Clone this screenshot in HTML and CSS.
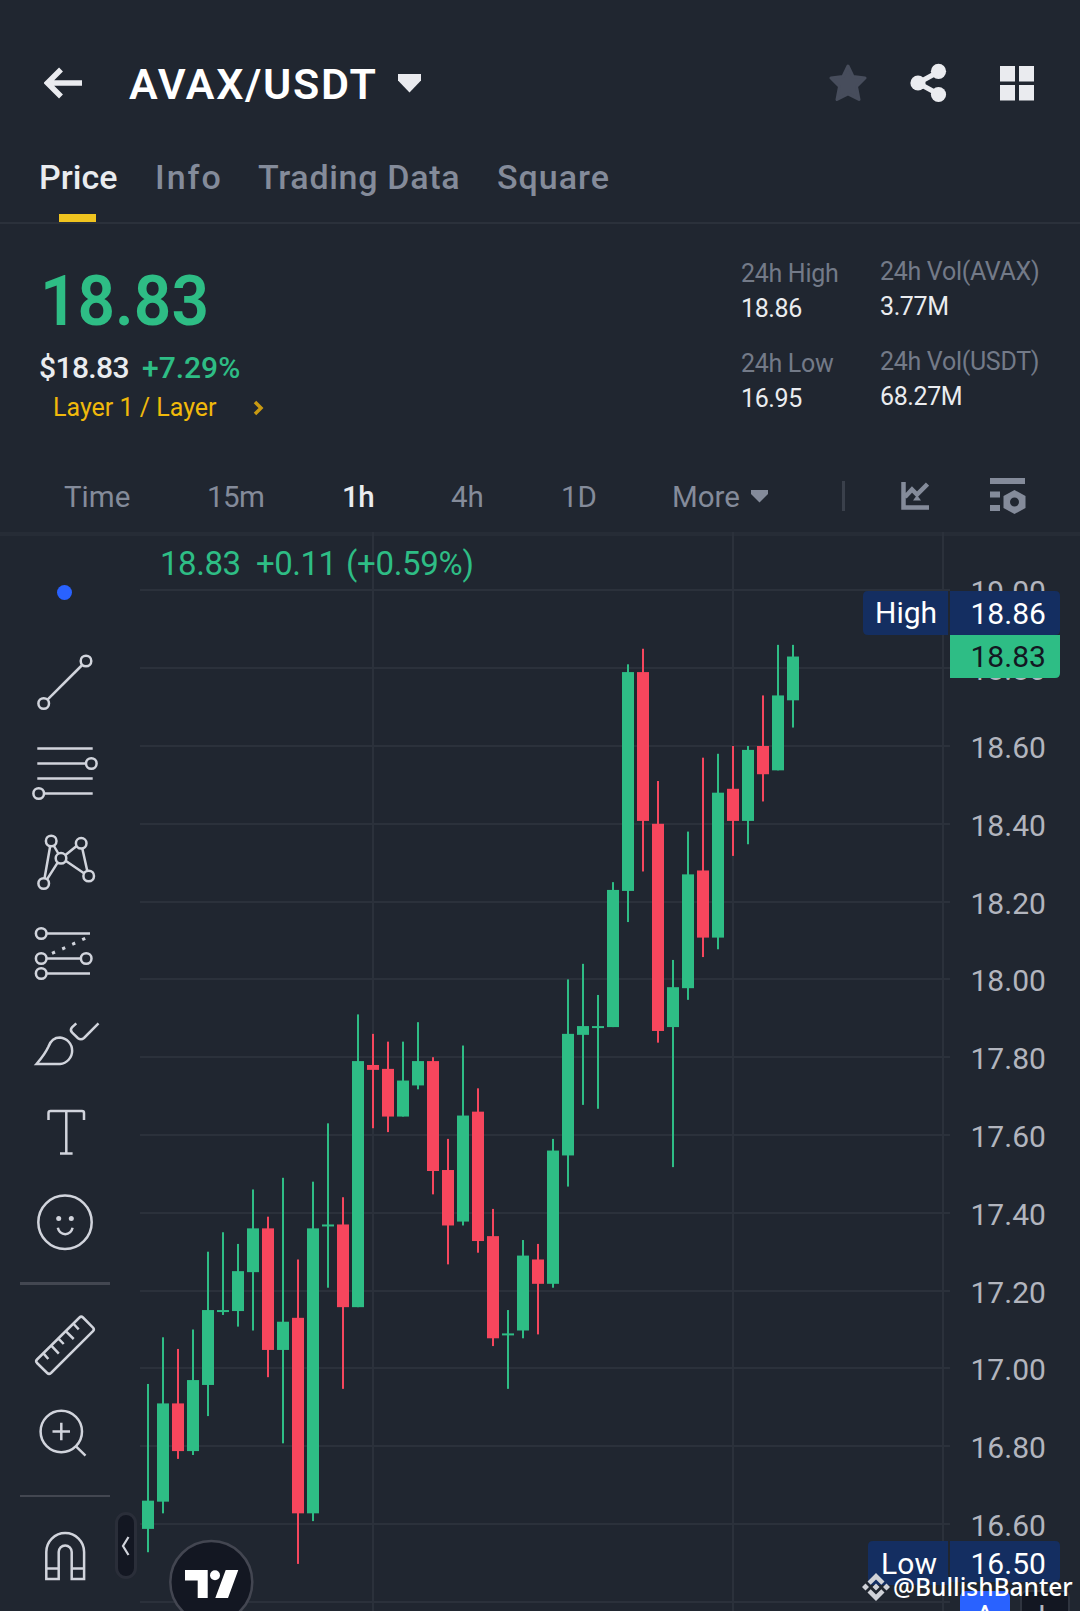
FILE: index.html
```html
<!DOCTYPE html>
<html lang="en">
  <head>
    <meta charset="UTF-8" />
    <meta name="viewport" content="width=device-width, initial-scale=1.0" />
    <title>AVAX/USDT</title>
    <link rel="stylesheet" href="styles.css">
  </head>
  <body>
    <header class="header">
      <svg class="back" width="38" height="32" viewBox="0 0 38 32"><path d="M38 16H4M17 2.500L3.500 16L17 29.500" /></svg>
      <h1 class="pair">AVAX/USDT</h1>
      <svg class="pair-caret" width="23" height="19" viewBox="0 0 23 19"><path d="M0 0H23V6.500L11.500 18.500L0 6.500Z" /></svg>
      <div class="header-icons">
        <svg class="star" width="38" height="40" viewBox="0 0 38 40"><path d="M19 3L24 13.500L36 15L27.500 23.500L30 36.500L19 31L8 36.500L10.500 23.500L2 15L14 13.500Z" /></svg>
        <svg class="share" width="38" height="40" viewBox="0 0 38 40">
          <path d="M30 8.500L9 20L30 31.500" />
          <circle cx="9" cy="20" r="7.600" /><circle cx="29.500" cy="8.300" r="7.600" /><circle cx="29.500" cy="31.500" r="7.600" />
        </svg>
        <svg class="grid-icon" width="34" height="35" viewBox="0 0 34 35"><path d="M0 0H15V15.500H0ZM19 0H34V15.500H19ZM0 19H15V34.500H0ZM19 19H34V34.500H19Z" /></svg>
      </div>
    </header>

    <nav class="tabs">
      <a class="tab active t-price">Price</a>
      <a class="tab t-info">Info</a>
      <a class="tab t-data">Trading Data</a>
      <a class="tab t-square">Square</a>
    </nav>

    <section class="summary">
      <div class="price-box">
        <div class="last-price">18.83</div>
        <div class="price-row"><span class="fiat">$18.83</span><span class="change">+7.29%</span></div>
        <div class="category">
          <span>Layer 1 / Layer</span>
          <svg width="11" height="16" viewBox="0 0 11 16"><path d="M2 2L8 8L2 14" /></svg>
        </div>
      </div>
      <div class="stats">
        <div class="stat-col">
          <div class="stat-label">24h High</div>
          <div class="stat-value">18.86</div>
          <div class="stat-label">24h Low</div>
          <div class="stat-value">16.95</div>
        </div>
        <div class="stat-col stat-vol">
          <div class="stat-label">24h Vol(AVAX)</div>
          <div class="stat-value">3.77M</div>
          <div class="stat-label">24h Vol(USDT)</div>
          <div class="stat-value">68.27M</div>
        </div>
      </div>
    </section>

    <nav class="intervals">
      <span class="iv iv-time">Time</span>
      <span class="iv iv-15m">15m</span>
      <span class="iv iv-1h active">1h</span>
      <span class="iv iv-4h">4h</span>
      <span class="iv iv-1d">1D</span>
      <span class="iv iv-more">More</span>
      <svg class="more-caret" width="17" height="13" viewBox="0 0 17 13"><path d="M0 0H17V4L8.500 12.500L0 4Z" /></svg>
      <i class="sep"></i>
      <svg class="line-icon" width="28" height="28" viewBox="0 0 28 28">
        <path class="stroke" d="M2.500 0V25.500H28M4 15L11 7.500L16 12.500L26.500 2" />
        <path d="M16 13L20 18.500H12Z" />
      </svg>
      <svg class="settings-icon" width="36" height="38" viewBox="0 0 36 38">
        <path d="M0 1H35V7H0ZM0 14.500H10V20.500H0ZM0 28H10V34H0Z" />
        <path fill-rule="evenodd" d="M24.500 13L35.500 19V31L24.500 37L13.500 31V19ZM24.500 20.500A4.500 4.500 0 1 0 24.500 29.500A4.500 4.500 0 1 0 24.500 20.500Z" />
      </svg>
    </nav>

    <main class="chart-area">
      <aside class="toolbar">
        <div class="dot-row"><i class="dot"></i></div>
        <!-- trend line -->
        <svg class="tool" viewBox="0 0 140 90"><path d="M47.500 62.700L82.200 28" /><circle cx="43.700" cy="66.500" r="5.300" /><circle cx="86" cy="24" r="5.300" /></svg>
        <!-- fib retracement -->
        <svg class="tool" viewBox="0 0 140 90"><path d="M37.300 21.500H92.700M37.300 36.500H86M37.300 51.500H92.700M44 66.500H92.700" /><circle cx="91.300" cy="36.500" r="5.300" /><circle cx="38.700" cy="66.500" r="5.300" /></svg>
        <!-- pattern -->
        <svg class="tool" viewBox="0 0 140 90"><path d="M50.200 29L44.600 61M53.700 28.500L58.300 36.500M57.800 45.300L47 62.300M65.500 38L76.600 29M82.200 31L87.300 54M65.600 43.800L84 56.300" /><circle cx="51.200" cy="24" r="5.300" /><circle cx="61" cy="41.300" r="5.300" /><circle cx="81.200" cy="26.300" r="5.300" /><circle cx="88.700" cy="59" r="5.300" /><circle cx="43.700" cy="66.500" r="5.300" /></svg>
        <!-- forecast -->
        <svg class="tool" viewBox="0 0 140 90"><path d="M46.300 26.500H90M46.300 51.500H80.700M46.300 66.500H90" /><path d="M52 46.300L55 45M62.200 42L65.200 40.700M72.200 37.300L75.200 36M82.200 32.700L85.200 31.300" stroke-width="3" /><circle cx="41.200" cy="26.500" r="5.300" /><circle cx="41.200" cy="51.500" r="5.300" /><circle cx="86.200" cy="51.500" r="5.300" /><circle cx="41.200" cy="66.500" r="5.300" /></svg>
        <!-- brush -->
        <svg class="tool" viewBox="0 0 140 90"><path d="M36.500 67C43 59.500 46 55 48.500 49.500C50.500 44 54.500 40.500 60 40.500A13.300 13.300 0 0 1 60 67ZM98.500 26.300L84 41Q81 43.500 78 41.200L72 35.500Q69.800 33 72 30.300L76.300 26.300" /></svg>
        <!-- text -->
        <svg class="tool" viewBox="0 0 140 90"><path d="M48.500 33V26Q48.500 24 50.500 24H82Q84 24 84 26V33M66.300 24V66.500M60 66.500H72.600" /></svg>
        <!-- emoji -->
        <svg class="tool" viewBox="0 0 140 90"><circle cx="65" cy="45.200" r="26.700" /><path d="M57.800 50.800C60 59.300 70.400 59.300 72.600 50.800" /><circle class="fill" cx="58.700" cy="41.500" r="2.500" /><circle class="fill" cx="71.300" cy="41.500" r="2.500" /></svg>
        <i class="tool-line"></i>
        <!-- ruler -->
        <svg class="tool" viewBox="0 0 140 90"><path d="M79.500 17.500Q81.200 15.800 83 17.500L93 27.500Q94.700 29.300 93 31.200L51 73Q49 74.700 47.200 73L37 63Q35.300 61.200 37 59.500ZM43.700 53.600L48.300 59M51.300 45.700L58.800 53.700M58.700 38.800L63.700 44M66 31.300L73.700 39M73.700 24L78.700 29.300" /></svg>
        <!-- zoom -->
        <svg class="tool" viewBox="0 0 140 90"><circle cx="61.300" cy="41.500" r="20.700" /><path d="M52.500 41.500H70M61.300 32.800V50.300M76 56.400L85.500 65.700" /></svg>
        <i class="tool-line last"></i>
        <!-- magnet -->
        <svg class="tool" viewBox="0 0 140 90"><path d="M46.300 73V46A18.900 18.900 0 0 1 84.100 46V73H71.700V46A6.500 6.500 0 0 0 58.700 46V73ZM46.300 62.500H58.700M71.700 62.500H84.100" /></svg>
      </aside>

      <svg class="chart" width="940" height="1079" viewBox="0 0 940 1079">
        <g id="grid"></g>
        <g id="candles"></g>
        <g id="axis"></g>
        <g class="legend">
          <text x="20" y="42.500" textLength="81">18.83</text>
          <text x="116" y="42.500" textLength="81">+0.11</text>
          <text x="206" y="42.500" textLength="128">(+0.59%)</text>
        </g>
        <!-- high / last / low labels -->
        <path class="tag" d="M728 59H808V103H728Q723 103 723 98V64Q723 59 728 59Z" />
        <path class="tag" d="M810 59H915Q920 59 920 64V98Q920 103 915 103H810Z" />
        <path class="tag-last" d="M810 103H920V141Q920 146 915 146H810Z" />
        <text class="tag-text" x="735" y="90.500" textLength="62">High</text>
        <text class="tag-text" x="830.500" y="92">18.86</text>
        <text class="last-text" x="830.500" y="135">18.83</text>
        <path class="tag" d="M733 1009H808V1053H733Q728 1053 728 1048V1014Q728 1009 733 1009Z" />
        <path class="tag" d="M810 1009H915Q920 1009 920 1014V1045Q920 1050 915 1050H810Z" />
        <text class="tag-text" x="741" y="1042" textLength="56">Low</text>
        <text class="tag-text" x="830.500" y="1042">16.50</text>
        <!-- scale buttons -->
        <rect class="btn-auto" x="820" y="1059" width="50" height="50" rx="6" />
        <rect class="btn-log" x="881" y="1059" width="48" height="50" rx="6" />
        <text class="btn-text" x="835" y="1094">A</text>
        <text class="btn-text dim" x="898" y="1094">L</text>
        <!-- tradingview badge -->
        <circle class="tv-bg" cx="71.300" cy="1050" r="41" />
        <path class="tv" d="M45 1038H67.700V1066H57.700V1048.500H45ZM85.700 1038H98.300L88 1066H75.300Z" />
        <circle class="tv" cx="75" cy="1043.300" r="5" />
      </svg>

      <button class="collapse"><svg width="10" height="22" viewBox="0 0 10 22"><path d="M7.500 2L2 11L7.500 20" /></svg></button>
      <div class="author">
        <svg width="28" height="28" viewBox="0 0 28 28"><path d="M14 0L22.500 8.500L19.300 11.700L14 6.400L8.700 11.700L5.500 8.500ZM14 28L22.500 19.500L19.300 16.300L14 21.600L8.700 16.300L5.500 19.500ZM14 10.500L17.500 14L14 17.500L10.500 14ZM3.500 10.500L7 14L3.500 17.500L0 14ZM24.500 10.500L28 14L24.500 17.500L21 14Z" /></svg>
        <span>@BullishBanter</span>
      </div>
    </main>
    <script src="chart.js"></script>
  </body>
</html>
```

FILE: styles.css
```css
body {
  margin: 0;
  width: 1080px;
  height: 1611px;
  overflow: hidden;
  background-color: #202630;
  color: #eaecef;
  font-family: Roboto, "Liberation Sans", sans-serif;
}

.header {
  display: flex;
  align-items: center;
  height: 166px;
  padding: 0 46px 0 44px;
  box-sizing: border-box;
}

.back path {
  fill: none;
  stroke: #eaebef;
  stroke-width: 5.5;
}

.pair {
  margin: 2px 0 0 47px;
  width: 251px;
  font-size: 43px;
  font-weight: 600;
  letter-spacing: 1.7px;
  color: #fff;
}

.pair-caret {
  margin-left: 18px;
  fill: #eaebef;
}

.header-icons {
  display: flex;
  align-items: center;
  margin-left: auto;
}

.star {
  fill: #474d5c;
  stroke: #474d5c;
  stroke-width: 3;
  stroke-linejoin: round;
}

.share {
  margin-left: 42px;
  fill: #eaebef;
}

.share path {
  fill: none;
  stroke: #eaebef;
  stroke-width: 5;
}

.grid-icon {
  margin-left: 53px;
  fill: #eaebef;
}

.tabs {
  display: flex;
  height: 56px;
  padding-left: 39px;
  border-bottom: 2px solid #2b313b;
}

.tab {
  position: relative;
  font-size: 34px;
  line-height: 22px;
  font-weight: 500;
  color: #848b9a;
}

.tab.active {
  color: #eaecef;
}

.tab.active::after {
  content: "";
  position: absolute;
  left: 20px;
  bottom: 0;
  width: 37px;
  height: 8px;
  background-color: #f0c41f;
}

.t-price {
  width: 116px;
}

.t-info {
  width: 103px;
  letter-spacing: 2px;
}

.t-data {
  width: 239px;
  letter-spacing: 0.7px;
}

.t-square {
  letter-spacing: 1px;
}

.summary {
  display: flex;
  justify-content: space-between;
  height: 236px;
}

.price-box {
  padding: 34px 0 0 39px;
}

/* condensed digits */
.last-price {
  padding-left: 1px;
  font-size: 70px;
  line-height: 86px;
  font-weight: 600;
  color: #2ebd85;
  transform: scaleX(0.94);
  transform-origin: left;
}

.price-row {
  display: flex;
  margin-top: 6px;
  font-size: 30px;
  line-height: 36px;
  font-weight: 500;
}

.fiat {
  width: 103px;
  letter-spacing: -0.6px;
}

.change {
  color: #2ebd85;
}

.category {
  display: flex;
  align-items: center;
  gap: 36px;
  margin: 6px 0 0 14px;
  font-size: 25px;
  line-height: 32px;
  color: #f0b90b;
}

.category path {
  fill: none;
  stroke: #c99a12;
  stroke-width: 3.5;
}

.stats {
  display: flex;
  width: 339px;
  padding-top: 31px;
  font-size: 25px;
  line-height: 34px;
}

.stat-col {
  width: 139px;
  padding-top: 2px;
}

.stat-vol {
  padding-top: 0;
  width: 200px;
}

.stat-label {
  height: 35px;
  letter-spacing: -0.3px;
  color: #737a88;
  white-space: nowrap;
}

.stat-value {
  height: 55px;
  letter-spacing: -0.4px;
}

.intervals {
  display: flex;
  align-items: center;
  height: 72px;
  padding-left: 64px;
  font-size: 29.5px;
  color: #848b9a;
}

.iv {
  flex: none;
  padding-top: 2px;
}

.iv.active {
  color: #eaecef;
  font-weight: 500;
}

.iv-time {
  width: 143px;
}

.iv-15m {
  width: 135px;
  letter-spacing: -0.6px;
}

.iv-1h {
  width: 109px;
  letter-spacing: -0.6px;
}

.iv-4h {
  width: 110px;
}

.iv-1d {
  width: 111px;
}

.iv-more {
  width: 79px;
}

.more-caret {
  fill: #848b9a;
}

.sep {
  width: 3px;
  height: 30px;
  margin-left: 74px;
  background-color: #3a404b;
}

.line-icon {
  margin-left: 56px;
  fill: #848b9a;
}

.line-icon .stroke {
  fill: none;
  stroke: #848b9a;
  stroke-width: 4.5;
}

.settings-icon {
  margin-left: 61px;
  fill: #848b9a;
}

.chart-area {
  position: relative;
  display: flex;
  height: 1079px;
  box-shadow: inset 0 4px #262c36;
}

.toolbar {
  display: flex;
  flex-direction: column;
  width: 140px;
}

.dot-row {
  height: 105px;
}

.dot {
  display: block;
  width: 15px;
  height: 15px;
  margin: 53px 0 0 57px;
  border-radius: 50%;
  background-color: #2962ff;
}

.tool {
  flex: none;
  width: 140px;
  height: 90px;
  fill: none;
  stroke: #d1d4dc;
  stroke-width: 2.5;
}

.tool .fill {
  fill: #d1d4dc;
  stroke: none;
}

.tool-line {
  flex: none;
  width: 90px;
  height: 3px;
  margin: 15px 0 15px 20px;
  background-color: #434751;
}

.tool-line.last {
  height: 2px;
  margin-bottom: 9px;
}

.chart {
  flex: none;
}

.chart text {
  font-size: 30px;
}

#grid {
  stroke: #2b313b;
  stroke-width: 2;
}

#axis text {
  fill: #b2b5be;
}

.up {
  fill: #2ebd85;
}

.down {
  fill: #f6465d;
}

.chart .legend text {
  font-size: 33px;
  fill: #2ebd85;
}

.tag {
  fill: #142e61;
}

.tag-last {
  fill: #2ebd85;
}

.tag-text {
  fill: #fff;
}

.chart .last-text {
  fill: #131722;
}

.btn-auto {
  fill: #2962ff;
}

.btn-log {
  fill: #131722;
  stroke: #2f343f;
  stroke-width: 2;
}

.btn-text {
  fill: #fff;
}

.btn-text.dim {
  fill: #b2b5be;
}

.tv-bg {
  fill: #131722;
  stroke: #434651;
  stroke-width: 2.5;
}

.tv {
  fill: #fff;
}

.collapse {
  position: absolute;
  left: 115px;
  top: 980px;
  width: 22px;
  height: 67px;
  padding: 0;
  display: flex;
  align-items: center;
  justify-content: center;
  border: 3px solid #2a2e39;
  border-radius: 11px;
  background-color: #131722;
}

.collapse path {
  fill: none;
  stroke: #d1d4dc;
  stroke-width: 2.2;
}

.author {
  position: absolute;
  left: 862px;
  top: 1038px;
  display: flex;
  align-items: center;
  gap: 3px;
  font-family: "Noto Sans", sans-serif;
  font-size: 24.5px;
  font-weight: 500;
  line-height: 34px;
  color: #fff;
}

.author svg {
  fill: #d0d2d8;
}
```

FILE: chart.js
```js
// [open, close, high, low] per hour
const candles = [
  [16.59, 16.66, 16.96, 16.53], [16.66, 16.91, 17.08, 16.63],
  [16.91, 16.79, 17.05, 16.77], [16.79, 16.97, 17.10, 16.78],
  [16.96, 17.15, 17.30, 16.88], [17.15, 17.15, 17.35, 17.14],
  [17.15, 17.25, 17.32, 17.11], [17.25, 17.36, 17.46, 17.10],
  [17.36, 17.05, 17.39, 16.98], [17.05, 17.12, 17.49, 16.81],
  [17.13, 16.63, 17.28, 16.50], [16.63, 17.36, 17.48, 16.61],
  [17.37, 17.37, 17.63, 17.21], [17.37, 17.16, 17.44, 16.95],
  [17.16, 17.79, 17.91, 17.16], [17.78, 17.77, 17.86, 17.62],
  [17.77, 17.65, 17.84, 17.61], [17.65, 17.74, 17.84, 17.65],
  [17.73, 17.79, 17.89, 17.72], [17.79, 17.51, 17.80, 17.45],
  [17.51, 17.37, 17.59, 17.27], [17.38, 17.65, 17.83, 17.37],
  [17.66, 17.33, 17.72, 17.30], [17.34, 17.08, 17.41, 17.06],
  [17.09, 17.09, 17.15, 16.95], [17.10, 17.29, 17.33, 17.08],
  [17.28, 17.22, 17.32, 17.09], [17.22, 17.56, 17.59, 17.21],
  [17.55, 17.86, 18.00, 17.47], [17.86, 17.88, 18.04, 17.68],
  [17.88, 17.88, 17.96, 17.67], [17.88, 18.23, 18.25, 17.88],
  [18.23, 18.79, 18.81, 18.15], [18.79, 18.41, 18.85, 18.28],
  [18.40, 17.87, 18.51, 17.84], [17.88, 17.98, 18.05, 17.52],
  [17.98, 18.27, 18.38, 17.95], [18.28, 18.11, 18.57, 18.06],
  [18.11, 18.48, 18.58, 18.08], [18.49, 18.41, 18.60, 18.32],
  [18.41, 18.59, 18.60, 18.35], [18.60, 18.53, 18.73, 18.46],
  [18.54, 18.73, 18.86, 18.54], [18.72, 18.83, 18.86, 18.65],
];

const y = (price) => 58.4 + (19 - price) * 389;

let grid = '';
let axis = '';
for (let i = 0; i <= 13; i++) {
  const price = 19 - i * 0.2;
  const py = Math.round(y(price));
  grid += `<path d="M0 ${py}H810" />`;
  if (i < 13) {
    axis += `<text x="830.5" y="${py + 11.5}">${price.toFixed(2)}</text>`;
  }
}
[233, 593, 803].forEach((x) => {
  grid += `<path d="M${x} 0V1079" />`;
});
document.getElementById('grid').innerHTML = grid;
document.getElementById('axis').innerHTML = axis;

document.getElementById('candles').innerHTML = candles
  .map(([open, close, high, low], i) => {
    const x = 8 + i * 15;
    const top = y(Math.max(open, close));
    const bottom = y(Math.min(open, close)) + 1;
    return `<g class="${close >= open ? 'up' : 'down'}">
      <rect x="${x - 1}" y="${y(high)}" width="2" height="${y(low) - y(high) + 1}" />
      <rect x="${x - 6}" y="${top}" width="12" height="${Math.max(bottom - top, 2)}" />
    </g>`;
  })
  .join('');
```
